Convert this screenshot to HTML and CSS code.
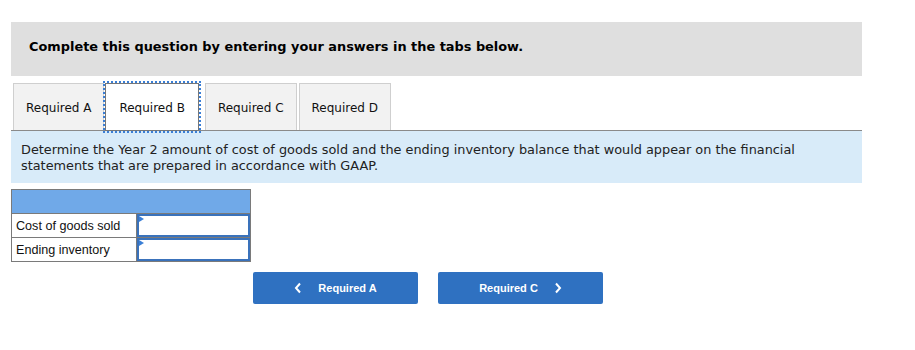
FILE: index.html
```html
<!DOCTYPE html>
<html lang="en">
<head>
<meta charset="UTF-8" />
<title>Question</title>
<link rel="stylesheet" href="styles.css">
</head>
<body>

  <!-- 안내 박스 -->
  <section class="instructions">
    <p>Complete this question by entering your answers in the tabs below.</p>
  </section>

  <!-- 탭 -->
  <nav class="tabs">
    <div class="tab">Required A</div>
    <div class="tab active">Required B</div>
    <div class="tab">Required C</div>
    <div class="tab">Required D</div>
  </nav>

  <section class="prompt">
    <p>Determine the Year 2 amount of cost of goods sold and the ending inventory balance that would appear on the financial statements that are prepared in accordance with GAAP.</p>
  </section>

  <!-- 답 입력 표 -->
  <table class="answers">
    <tr class="head">
      <th colspan="2"></th>
    </tr>
    <tr>
      <td class="label">Cost of goods sold</td>
      <td class="cell"><div class="input"></div></td>
    </tr>
    <tr>
      <td class="label">Ending inventory</td>
      <td class="cell"><div class="input"></div></td>
    </tr>
  </table>

  <div class="nav-buttons">
    <a class="btn" href="#">
      <svg width="8" height="12" viewBox="0 0 8 12"><path d="M6 1.5 L2 6 L6 10.5" fill="none" stroke="#fff" stroke-width="2"/></svg>
      <span>Required A</span>
    </a>
    <a class="btn" href="#">
      <span>Required C</span>
      <svg width="8" height="12" viewBox="0 0 8 12"><path d="M2 1.5 L6 6 L2 10.5" fill="none" stroke="#fff" stroke-width="2"/></svg>
    </a>
  </div>

</body>
</html>
```

FILE: styles.css
```css
  /* Reset */
  * {
    margin: 0; padding: 0; box-sizing: border-box;
  }

  body {
    font-family: "DejaVu Sans", Verdana, sans-serif;
    background: #fff;
    color: #111;
    padding: 22px 0 0 11px;
    width: 862px;
  }

  .instructions {
    background: #dfdfdf;
    height: 54px;
    padding: 17px 0 0 18px;
  }

  .instructions p {
    font-size: 12.9px;
    font-weight: bold;
    color: #000;
  }

  /* 탭 */
  .tabs {
    margin-top: 7px;
    display: flex;
    gap: 2px;
    padding-left: 2px;
    border-bottom: 1px solid #8a8a8a;
  }

  .tab {
    background: #f2f2f2;
    border: 1px solid #cfcfcf;
    border-bottom: none;
    height: 47px;
    padding: 1px 12px 0;
    display: flex;
    align-items: center;
    font-size: 12px;
    color: #111;
  }

  .tab.active {
    background: #fff;
    border: 1px solid #777;
    outline: 2px dotted #3b7fd6;
    outline-offset: 0;
    margin-bottom: -1px;
    height: 48px;
    padding: 1px 13px 0;
    margin-left: -1px;
    margin-right: 4px;
  }

  .prompt {
    background: #d8ebf9;
    height: 52px;
    padding: 11px 10px 0 10px;
  }

  .prompt p {
    font-size: 12.85px;
    line-height: 16px;
    color: #222;
  }

  /* 표 */
  .answers {
    margin-top: 6px;
    border-collapse: collapse;
    width: 240px;
    font-family: "Liberation Sans", Arial, sans-serif;
  }

  .answers th {
    background: #70a9e8;
    height: 24px;
    border: 1px solid #7a7a7a;
  }

  .answers td {
    border: 1px solid #7a7a7a;
    height: 24px;
  }

  .answers .label {
    width: 125px;
    font-size: 12.6px;
    padding: 0 4px;
    color: #111;
  }

  .answers .cell {
    padding: 0;
  }

  .input {
    position: relative;
    height: 23px;
    border: 2px solid #3a72bb;
    background: #fff;
  }

  .input::before {
    content: '';
    position: absolute;
    top: 0;
    left: 0;
    border-left: 5px solid #3a7fd6;
    border-top: 3px solid transparent;
    border-bottom: 3px solid transparent;
  }

  /* 버튼 */
  .nav-buttons {
    margin: 10px 0 0 242px;
    display: flex;
    gap: 20px;
  }

  .btn {
    width: 165px;
    height: 32px;
    background: #2f71c1;
    border-radius: 2px;
    display: flex;
    align-items: center;
    justify-content: center;
    gap: 16px;
    color: #fff;
    text-decoration: none;
    font-family: "Liberation Sans", Arial, sans-serif;
    font-weight: bold;
    font-size: 11px;
  }
```
